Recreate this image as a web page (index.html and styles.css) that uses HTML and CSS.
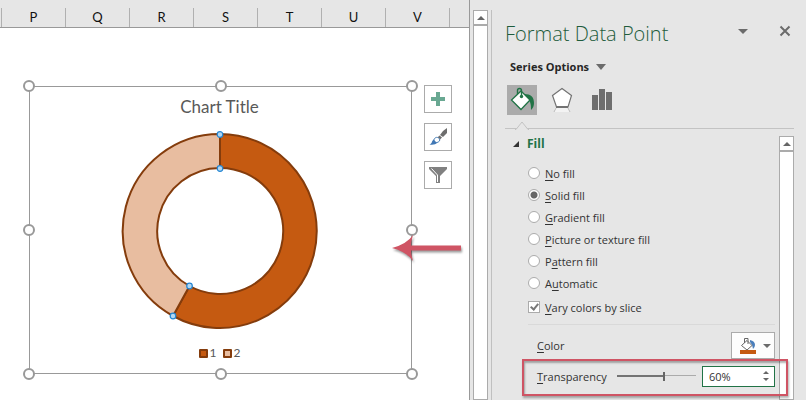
FILE: index.html
```html
<!DOCTYPE html>
<html lang="en">
<head>
  <meta charset="UTF-8" />
  <meta name="viewport" content="width=device-width, initial-scale=1.0"/>
  <title>Format Data Point</title>
  <link rel="stylesheet" href="styles.css">
</head>
<body>
  <div class="app">
    <main class="sheet">
      <div class="columns">
        <span>P</span>
        <span>Q</span>
        <span>R</span>
        <span>S</span>
        <span>T</span>
        <span>U</span>
        <span>V</span>
      </div>

      <div class="cells">
        <div class="chart">
          <h2>Chart Title</h2>
          <svg class="doughnut" width="208" height="208" viewBox="-104 -104 208 208">
            <g stroke="#843c0c" stroke-width="2" stroke-linejoin="round">
              <path fill="#c55a11" d="M0-97A97 97 0 1 1-47 85L-30.5 55A63 63 0 1 0 0-63Z"/>
              <path fill="#e8bda0" d="M0-97A97 97 0 0 0-47 85L-30.5 55A63 63 0 0 1 0-63Z"/>
            </g>
            <g fill="#b4d7f1" stroke="#2386d3" stroke-width="1.2">
              <circle cx="0" cy="-96.500" r="2.800"/>
              <circle cx="0" cy="-62.500" r="2.800"/>
              <circle cx="-30.500" cy="55" r="2.800"/>
              <circle cx="-47" cy="85" r="2.800"/>
            </g>
          </svg>
          <div class="legend">
            <span class="key key-one">1</span>
            <span class="key key-two">2</span>
          </div>

          <i class="handle top left"></i>
          <i class="handle top center"></i>
          <i class="handle top right"></i>
          <i class="handle middle left"></i>
          <i class="handle middle right"></i>
          <i class="handle bottom left"></i>
          <i class="handle bottom center"></i>
          <i class="handle bottom right"></i>

          <svg class="arrow" width="72" height="32" viewBox="0 0 72 32">
            <path fill="#cf5464" d="M1 16Q16 12 22 3Q20 9 20 13.500H70V18.500H20Q20 23 22 29Q16 20 1 16Z"/>
          </svg>
        </div>

        <div class="chart-tools">
          <button type="button" aria-label="Chart Elements">
            <svg width="26" height="26" viewBox="0 0 26 26"><path fill="#69a892" d="M11 6h4v5h5v4h-5v5h-4v-5H6v-4h5z"/></svg>
          </button>
          <button type="button" aria-label="Chart Styles">
            <svg width="26" height="26" viewBox="0 0 26 26">
              <path fill="#6d6d6d" d="M22 4v5l-4 4-3-2 3-4zM14.500 11.500l2.500 2-2 2-2.500-2z"/>
              <path fill="#fff" stroke="#4a80b8" d="M9 18c-1-3 2-6 4.500-4 3 2 .5 5-4.500 5z"/>
              <path fill="#4178b5" d="M4.500 20.500C8 19 6 17 9 15.500c1 2 2 2 3 3-1 2-4 2.500-7.500 2z"/>
            </svg>
          </button>
          <button type="button" aria-label="Chart Filters">
            <svg width="26" height="26" viewBox="0 0 26 26">
              <path fill="#808080" d="M4 5h18v2l-7 7v7h-4v-7L4 7z"/>
              <path fill="none" stroke="#fff" d="M6.500 6.500l6 6.500v7"/>
            </svg>
          </button>
        </div>
      </div>
    </main>

    <div class="scrollbar sheet-scroll">
      <button type="button" aria-label="Scroll up"></button>
    </div>

    <aside class="pane">
      <header>
        <h1>Format Data Point</h1>
        <button type="button" class="caret" aria-label="Task pane options"></button>
        <button type="button" class="close" aria-label="Close">
          <svg width="12" height="12" viewBox="0 0 12 12"><path fill="none" stroke="#6b6b6b" stroke-width="2" d="M1.500 1.500l9 9M10.500 1.500l-9 9"/></svg>
        </button>
      </header>

      <button type="button" class="series">Series Options <span class="caret"></span></button>

      <nav class="tabs">
        <button type="button" class="active" aria-label="Fill &amp; Line">
          <svg width="30" height="30" viewBox="0 0 30 30">
            <path fill="#217346" d="M17 9c7 0 10 3 10 9 0 3-1 5-3 7 0-4 0-8-3-11z"/>
            <path fill="#fff" stroke="#217346" stroke-width="1.3" d="M14 6l9 9-9 9.500L4.500 15z"/>
            <path fill="none" stroke="#217346" stroke-width="1.4" d="M10.500 9V5.500q0-2 2-2t2 2V11"/>
            <circle cx="14.500" cy="11.500" r="1.700" fill="#217346"/>
          </svg>
        </button>
        <button type="button" aria-label="Effects">
          <svg width="30" height="30" viewBox="0 0 30 30">
            <path fill="#f3f3f3" d="M8 23h14l1 4H7z"/>
            <path fill="none" stroke="#bbb" d="M9 23l-2 4M21 23l2 4"/>
            <path fill="#fff" stroke="#737373" stroke-width="1.2" d="M15 3.500l9.500 7L21 22H9.500L5.500 10.500z"/>
            <path stroke="#737373" stroke-width="2" d="M9 22h12"/>
          </svg>
        </button>
        <button type="button" aria-label="Series Options">
          <svg width="30" height="30" viewBox="0 0 30 30"><path fill="#6e6e6e" d="M5 10h6v15H5zM12 4h6v21h-6zM19 7h6v18h-6z"/></svg>
        </button>
      </nav>
      <div class="rule">
        <svg width="14" height="9" viewBox="0 0 14 9"><path fill="#e6e6e6" stroke="#c3c3c3" d="M0 8.500h1L7 1l6 7.500h1"/></svg>
      </div>

      <div class="pane-body">
        <form>
          <h3>Fill</h3>
          <label><input type="radio" name="fill"><span><u>N</u>o fill</span></label>
          <label><input type="radio" name="fill" checked><span><u>S</u>olid fill</span></label>
          <label><input type="radio" name="fill"><span><u>G</u>radient fill</span></label>
          <label><input type="radio" name="fill"><span><u>P</u>icture or texture fill</span></label>
          <label><input type="radio" name="fill"><span>P<u>a</u>ttern fill</span></label>
          <label><input type="radio" name="fill"><span>A<u>u</u>tomatic</span></label>
          <label class="vary"><input type="checkbox" checked><span><u>V</u>ary colors by slice</span></label>
          <hr>
          <div class="field">
            <label for="color"><u>C</u>olor</label>
            <button type="button" id="color" class="color">
              <svg width="18" height="18" viewBox="0 0 18 18">
                <path fill="#4a7ebb" d="M11 3q5 1 5 5 0 2-2 4 0-4-3-7z"/>
                <path fill="#fff" stroke="#666" d="M8 3.500l5 5-5 4.500-5.500-4.500z"/>
                <path fill="none" stroke="#666" d="M5.500 6V1.500H9V7"/>
                <path fill="#c55a11" d="M1 13h16v4H1z"/>
              </svg>
              <span class="caret"></span>
            </button>
          </div>
          <div class="field transparency">
            <label for="transparency"><u>T</u>ransparency</label>
            <input type="range" id="transparency" min="0" max="100" value="60">
            <div class="spinner">
              <input type="text" value="60%" aria-label="Transparency percent">
              <div class="steps">
                <button type="button" aria-label="Increase"></button>
                <button type="button" aria-label="Decrease"></button>
              </div>
            </div>
          </div>
        </form>
        <div class="scrollbar">
          <button type="button" aria-label="Scroll up"></button>
        </div>
      </div>
    </aside>
  </div>
</body>
</html>
```
FILE: styles.css
```css
*, *::before, *::after {
  box-sizing: border-box;
}

body {
  margin: 0;
  background: #e6e6e6;
  color: #333;
  font-family: "Open Sans", "Noto Sans", sans-serif;
  font-size: 11px;
}

h1, h2, h3 {
  margin: 0;
  font-weight: normal;
}

button {
  padding: 0;
  border: 0;
  background: none;
  color: inherit;
  font: inherit;
}

svg {
  display: block;
}

u {
  text-underline-offset: 2px;
}

.app {
  display: flex;
  min-height: 100vh;
  overflow: hidden;
}

/* worksheet */
.sheet {
  flex: 1;
  display: flex;
  flex-direction: column;
  min-width: 0;
  border-right: 1px solid #999;
}

.columns {
  display: flex;
  height: 28px;
  padding: 8px 0 0 1px;
  border-bottom: 1px solid #999;
  color: #111;
  font: 13px/19px Lato, sans-serif;
  text-align: center;
}

.columns span {
  width: 64px;
  border-left: 1px solid #b0b0b0;
}

.columns span:last-child {
  width: 65px;
  border-right: 1px solid #b0b0b0;
}

.cells {
  flex: 1;
  display: flex;
  align-items: flex-start;
  gap: 12px;
  padding: 58px 17px 26px 29px;
  background: #fff;
}

.chart {
  position: relative;
  flex: 1;
  display: flex;
  flex-direction: column;
  align-items: center;
  height: 288px;
  padding: 8px 2px 0 0;
  border: 1px solid #999;
  color: #595959;
  font-family: Lato, sans-serif;
}

.chart h2 {
  font-size: 17px;
  line-height: 24px;
}

.doughnut {
  margin-top: 8px;
}

.legend {
  display: flex;
  gap: 6px;
  margin-top: 10px;
  font-size: 12px;
  line-height: 16px;
}

.key {
  display: flex;
  align-items: center;
  gap: 2px;
}

.key::before {
  content: "";
  width: 9px;
  height: 9px;
  border: 2px solid #843c0c;
  border-radius: 1px;
  background: #c55a11;
}

.key-two::before {
  background: #e8bda0;
}

.handle {
  position: absolute;
  width: 12px;
  height: 12px;
  border: 2px solid #999;
  border-radius: 50%;
  background: #fff;
}

.top { top: -7px; }
.middle { top: calc(50% - 6px); }
.bottom { bottom: -7px; }
.left { left: -7px; }
.center { left: calc(50% - 6px); }
.right { right: -7px; }

.arrow {
  position: absolute;
  top: 145px;
  right: -52px;
  filter: drop-shadow(1px 2px 1px rgba(0,0,0,0.4));
}

.chart-tools {
  display: grid;
  gap: 10px;
  margin-top: -1px;
}

.chart-tools button {
  width: 28px;
  height: 28px;
  border: 1px solid #ababab;
  background: #fff;
}

/* scrollbars */
.scrollbar {
  width: 15px;
  border: 1px solid #ababab;
  background: #fff;
}

.scrollbar button {
  display: grid;
  place-items: center;
  width: 13px;
  height: 15px;
  border-bottom: 2px solid #ababab;
}

.scrollbar button::before {
  content: "";
  border: 4px solid transparent;
  border-top: 0;
  border-bottom-color: #666;
}

.sheet-scroll {
  margin: 10px 3px 0;
}

/* task pane */
.pane {
  display: flex;
  flex-direction: column;
  width: 315px;
  margin-top: 10px;
  padding: 0 12px 0 13px;
  border-left: 1px solid #c0c0c0;
}

.pane header {
  display: flex;
  align-items: flex-start;
  height: 40px;
  padding-top: 10px;
}

.pane h1 {
  flex: 1;
  color: #1e5c3c;
  font-size: 20px;
  font-weight: 300;
  line-height: 28px;
}

.caret {
  border: 5px solid transparent;
  border-top-color: #6b6b6b;
  border-bottom: 0;
}

.pane header .caret {
  margin: 9px 31px 0 0;
}

.close {
  margin: 5px 3px 0 0;
}

.series {
  display: flex;
  align-items: center;
  align-self: flex-start;
  gap: 7px;
  margin: 8px 0 0 5px;
  color: #262626;
  font-weight: bold;
  line-height: 18px;
}

.series .caret {
  border-top-width: 6px;
}

.tabs {
  display: flex;
  gap: 10px;
  margin: 9px 0 0 2px;
}

.tabs .active {
  background: #ababab;
}

.rule {
  height: 14px;
  padding: 6px 0 0 10px;
  border-bottom: 1px solid #c3c3c3;
}

.rule svg {
  position: relative;
}

.pane-body {
  flex: 1;
  display: flex;
  justify-content: space-between;
  gap: 4px;
  padding-top: 7px;
}

form {
  flex: 1;
  padding-left: 23px;
}

h3 {
  display: flex;
  align-items: center;
  gap: 8px;
  margin: 0 0 10px -15px;
  color: #217346;
  font-size: 12px;
  font-weight: bold;
  line-height: 16px;
}

h3::before {
  content: "";
  border-bottom: 6px solid #333;
  border-left: 6px solid transparent;
}

form > label {
  display: flex;
  align-items: center;
  gap: 5px;
  height: 22px;
}

input[type="radio"],
input[type="checkbox"] {
  appearance: none;
  width: 12px;
  height: 12px;
  margin: 0;
  border: 1px solid #ababab;
  background: #fff;
}

input[type="radio"] {
  border-radius: 50%;
}

input[type="radio"]:checked {
  background: radial-gradient(circle, #666 3px, #fff 4px);
}

input[type="checkbox"]:checked::before {
  content: "";
  display: block;
  width: 5px;
  height: 8px;
  margin: 0 3px;
  border: solid #777;
  border-width: 0 2px 2px 0;
  transform: rotate(40deg);
}

form .vary {
  height: 26px;
}

hr {
  height: 1px;
  margin: 4px 0 7px;
  border: 0;
  background: #d9d9d9;
}

.field {
  position: relative;
  display: flex;
  align-items: center;
  justify-content: space-between;
  height: 27px;
  padding-left: 9px;
}

.color {
  display: flex;
  align-items: center;
  gap: 6px;
  width: 44px;
  height: 27px;
  padding-left: 7px;
  border: 1px solid #ababab;
  background: #fdfdfd;
}

.color .caret {
  border-width: 4px 4px 0;
}

.transparency {
  height: 34px;
}

.transparency label {
  flex: 1;
}

input[type="range"] {
  appearance: none;
  width: 79px;
  height: 12px;
  margin: 0 6px 0 0;
  background: linear-gradient(90deg, #737373 60%, transparent 60%) 0 5px / 100% 2px no-repeat,
              linear-gradient(#ababab, #ababab) 0 5px / 100% 1px no-repeat;
}

input[type="range"]::-webkit-slider-thumb {
  appearance: none;
  width: 2px;
  height: 9px;
  background: #666;
}

.spinner {
  display: flex;
  width: 73px;
  height: 21px;
  border: 1px solid #217346;
  background: #fff;
}

.spinner input {
  flex: 1;
  min-width: 0;
  padding: 0 0 0 6px;
  border: 0;
  background: none;
  color: inherit;
  font: inherit;
}

.steps {
  display: flex;
  flex-direction: column;
  justify-content: space-evenly;
  margin-right: 5px;
}

.steps button {
  border: 3px solid transparent;
  border-top: 0;
  border-bottom-color: #666;
}

.steps button:last-child {
  border-top: 3px solid #666;
  border-bottom: 0;
}

/* callout drawn round the transparency row */
.transparency::after {
  content: "";
  position: absolute;
  inset: 0 -13px -3px -6px;
  border: 2px solid #cf5464;
  box-shadow: 1px 2px 2px rgba(0,0,0,0.3), inset 1px 2px 2px rgba(0,0,0,0.3);
  pointer-events: none;
}
```
